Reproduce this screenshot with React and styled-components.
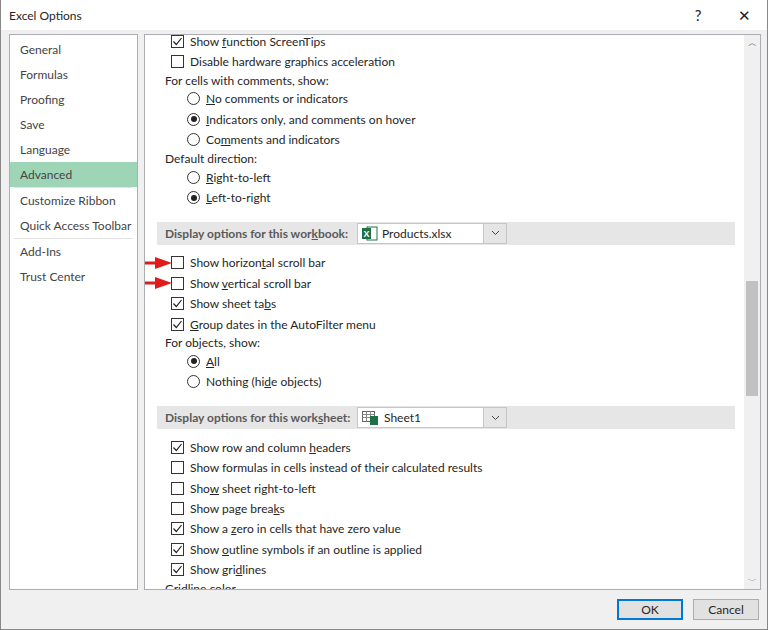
import React from 'react';
import styled, { createGlobalStyle } from 'styled-components';

const Global = createGlobalStyle`
  body { margin: 0; background: #f0f0f0; font-family: Lato, "Noto Sans", sans-serif; font-size: 12px; color: #262626; }
`;

const Window = styled.div`
  width: 768px; height: 630px; box-sizing: border-box;
  border: 1px solid #888; border-top: none;
  display: flex; flex-direction: column; background: #f0f0f0;
`;

const TitleBar = styled.div`
  height: 30px; display: flex; align-items: center; padding-left: 8px;
  background: #fff; font-size: 12px;
`;
const TitleText = styled.div` flex: 1; `;
const TitleBtn = styled.div`
  width: 46px; text-align: center; font-size: 15px; color: #222;
`;

const Body = styled.div`
  display: flex; gap: 6px; padding: 4px 6px 0 8px; height: 560px; box-sizing: border-box;
`;

const Nav = styled.div`
  width: 129px; background: #fff; border: 1px solid #abadb3; box-sizing: border-box;
  padding-top: 2px; display: flex; flex-direction: column;
`;
const NavItem = styled.div`
  height: 25px; line-height: 25px; padding-left: 10px; color: #444; white-space: nowrap;
  background: ${p => (p.active ? '#9fd5b7' : 'transparent')};
`;
const NavSep = styled.div` height: 1px; background: #e2e2e2; margin: 0 4px; `;

const Content = styled.div`
  flex: 1; background: #fff; border: 1px solid #abadb3; box-sizing: border-box;
  display: flex; overflow: hidden;
`;
const Scroller = styled.div` flex: 1; overflow: hidden; `;
const Inner = styled.div` margin-top: -4px; padding-left: 12px; padding-right: 12px; `;

const Row = styled.div`
  height: 20.4px; display: flex; align-items: center; gap: 6px; white-space: nowrap;
  padding-left: ${p => p.indent || 14}px; position: relative;
`;
const Label = styled.div` height: 17px; display: flex; align-items: center; padding-left: 8px; white-space: nowrap; `;
const Box = styled.span`
  width: 11px; height: 11px; border: 1px solid #333; display: inline-flex;
  align-items: center; justify-content: center; box-sizing: content-box;
`;
const Radio = styled.span`
  width: 11px; height: 11px; border: 1px solid #333; border-radius: 50%;
  display: inline-flex; align-items: center; justify-content: center;
  &::after { content: ''; width: 6px; height: 6px; border-radius: 50%; background: ${p => (p.on ? '#222' : 'transparent')}; }
`;
const U = styled.span` text-decoration: underline; `;

const Section = styled.div`
  height: 23px; margin: ${p => p.top}px 0 8px 0; background: #e6e6e6; display: flex; align-items: center;
  padding-left: 8px; width: 578px; box-sizing: border-box; white-space: nowrap;
`;
const SectionText = styled.div` width: 192px; font-weight: bold; color: #5a5a5a; `;
const Select = styled.div`
  width: 150px; height: 21px; background: #fff; border: 1px solid #c6c6c6; box-sizing: border-box;
  display: flex; align-items: center; gap: 4px; padding-left: 4px;
`;
const SelectText = styled.div` flex: 1; `;
const SelectBtn = styled.div`
  width: 22px; height: 19px; background: #e5e5e5; border-left: 1px solid #c6c6c6;
  display: flex; align-items: center; justify-content: center;
`;

const Arrow = styled.svg` position: absolute; left: -34px; `;

const ScrollBar = styled.div`
  width: 16px; background: #f0f0f0; display: flex; flex-direction: column; align-items: center;
`;
const ScrollArrow = styled.div` height: 16px; font-size: 9px; color: #606060; line-height: 16px; `;
const Track = styled.div` flex: 1; width: 100%; padding-top: 230px; box-sizing: border-box; `;
const Thumb = styled.div` height: 115px; margin: 0 2px; background: #c1c1c1; `;

const Footer = styled.div`
  flex: 1; display: flex; justify-content: flex-end; align-items: center; gap: 10px; padding-right: 8px;
`;
const Btn = styled.div`
  width: 66px; height: 21px; box-sizing: border-box; display: flex; align-items: center; justify-content: center;
  background: #e1e1e1; border: 1px solid ${p => (p.primary ? '#0078d7' : '#adadad')};
  ${p => p.primary && 'box-shadow: inset 0 0 0 1px #0078d7;'}
`;

const Check = ({ on }) => (
  <Box>
    {on && (
      <svg width="11" height="11" viewBox="0 0 11 11">
        <path d="M1.5 5.5 L4.3 8.5 L9.5 2" fill="none" stroke="#222" strokeWidth="1.2" />
      </svg>
    )}
  </Box>
);

const RedArrow = () => (
  <Arrow width="50" height="14" viewBox="0 0 50 14">
    <path d="M0 7 H36" stroke="#e01b1b" strokeWidth="3" />
    <path d="M32 1 L49 7 L32 13 Z" fill="#e01b1b" />
  </Arrow>
);

const CheckRow = ({ on, children, arrow }) => (
  <Row>
    {arrow && <RedArrow />}
    <Check on={on} />
    <span>{children}</span>
  </Row>
);

const RadioRow = ({ on, children }) => (
  <Row indent={30}>
    <Radio on={on} />
    <span>{children}</span>
  </Row>
);

const ExcelIcon = () => (
  <svg width="16" height="15" viewBox="0 0 16 15">
    <rect x="5" y="1" width="10" height="13" fill="#fff" stroke="#1e7145" />
    <rect x="0" y="2" width="9" height="11" fill="#1e7145" />
    <text x="1.5" y="11" fontSize="9" fill="#fff" fontFamily="Liberation Sans" fontWeight="bold">X</text>
  </svg>
);

const SheetIcon = () => (
  <svg width="18" height="15" viewBox="0 0 18 15">
    <rect x="0.5" y="1.5" width="12" height="10" fill="#fff" stroke="#666" />
    <path d="M0.5 4.5 H12.5 M0.5 7.5 H12.5 M4.5 1.5 V11.5 M8.5 1.5 V11.5" stroke="#888" />
    <rect x="8" y="6" width="8" height="9" fill="#1e7145" />
  </svg>
);

const Chevron = () => (
  <svg width="9" height="6" viewBox="0 0 9 6"><path d="M1 1 L4.5 4.5 L8 1" fill="none" stroke="#444" /></svg>
);

export default function App() {
  return (
    <Window>
      <Global />
      <TitleBar>
        <TitleText>Excel Options</TitleText>
        <TitleBtn>?</TitleBtn>
        <TitleBtn>✕</TitleBtn>
      </TitleBar>
      <Body>
        <Nav>
          <NavItem>General</NavItem>
          <NavItem>Formulas</NavItem>
          <NavItem>Proofing</NavItem>
          <NavItem>Save</NavItem>
          <NavItem>Language</NavItem>
          <NavItem active>Advanced</NavItem>
          <NavSep />
          <NavItem>Customize Ribbon</NavItem>
          <NavItem>Quick Access Toolbar</NavItem>
          <NavSep />
          <NavItem>Add-Ins</NavItem>
          <NavItem>Trust Center</NavItem>
        </Nav>
        <Content>
          <Scroller>
            <Inner>
              <CheckRow on>Show <U>f</U>unction ScreenTips</CheckRow>
              <CheckRow>Disable hardware <U>g</U>raphics acceleration</CheckRow>
              <Label>For cells with comments, show:</Label>
              <RadioRow><U>N</U>o comments or indicators</RadioRow>
              <RadioRow on><U>I</U>ndicators only, and comments on hover</RadioRow>
              <RadioRow>Co<U>m</U>ments and indicators</RadioRow>
              <Label>Default direction:</Label>
              <RadioRow><U>R</U>ight-to-left</RadioRow>
              <RadioRow on><U>L</U>eft-to-right</RadioRow>
              <Section top={14}>
                <SectionText>Display options for this wor<U>k</U>book:</SectionText>
                <Select>
                  <ExcelIcon />
                  <SelectText>Products.xlsx</SelectText>
                  <SelectBtn><Chevron /></SelectBtn>
                </Select>
              </Section>
              <CheckRow arrow>Show horizon<U>t</U>al scroll bar</CheckRow>
              <CheckRow arrow>Show <U>v</U>ertical scroll bar</CheckRow>
              <CheckRow on>Show sheet ta<U>b</U>s</CheckRow>
              <CheckRow on><U>G</U>roup dates in the AutoFilter menu</CheckRow>
              <Label>For objects, show:</Label>
              <RadioRow on><U>A</U>ll</RadioRow>
              <RadioRow>Nothing (hi<U>d</U>e objects)</RadioRow>
              <Section top={14}>
                <SectionText>Display options for this work<U>s</U>heet:</SectionText>
                <Select>
                  <SheetIcon />
                  <SelectText>Sheet1</SelectText>
                  <SelectBtn><Chevron /></SelectBtn>
                </Select>
              </Section>
              <CheckRow on>Show row and column <U>h</U>eaders</CheckRow>
              <CheckRow>Show formulas in cells instead of their calculated results</CheckRow>
              <CheckRow>Sho<U>w</U> sheet right-to-left</CheckRow>
              <CheckRow>Show page brea<U>k</U>s</CheckRow>
              <CheckRow on>Show a <U>z</U>ero in cells that have zero value</CheckRow>
              <CheckRow on>Show <U>o</U>utline symbols if an outline is applied</CheckRow>
              <CheckRow on>Show gri<U>d</U>lines</CheckRow>
              <Label>Gri<U>d</U>line color</Label>
            </Inner>
          </Scroller>
          <ScrollBar>
            <ScrollArrow>︿</ScrollArrow>
            <Track><Thumb /></Track>
            <ScrollArrow>﹀</ScrollArrow>
          </ScrollBar>
        </Content>
      </Body>
      <Footer>
        <Btn primary>OK</Btn>
        <Btn>Cancel</Btn>
      </Footer>
    </Window>
  );
}
